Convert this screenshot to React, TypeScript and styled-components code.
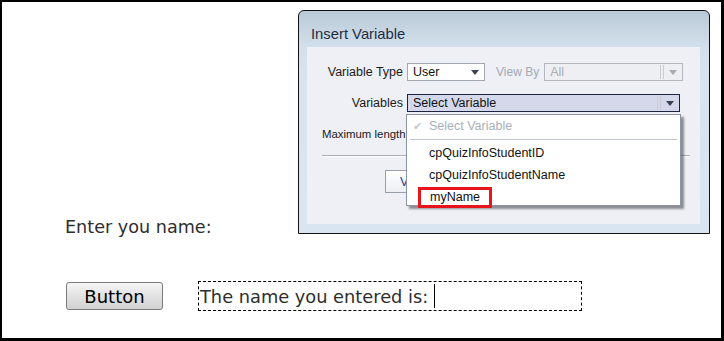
import * as React from 'react';
import styled, { createGlobalStyle } from 'styled-components';

const GlobalStyle = createGlobalStyle`
  html, body {
    margin: 0;
    padding: 0;
    background: #ffffff;
  }
  * {
    box-sizing: border-box;
  }
`;

const Slide = styled.div`
  width: 724px;
  height: 341px;
  border: 2px solid #000;
  border-right-width: 3px;
  border-bottom-width: 3px;
  background: #fff;
  display: flex;
  flex-direction: column;
  font-family: 'DejaVu Sans', 'Liberation Sans', sans-serif;
`;

const TopRow = styled.div`
  display: flex;
  padding: 8px 0 0 63px;
`;

const PromptColumn = styled.div`
  width: 233px;
  padding-top: 207px;
`;

const Prompt = styled.div`
  font-family: 'DejaVu Sans', sans-serif;
  font-size: 17.6px;
  line-height: 20px;
  color: #2e2e2e;
`;

const BottomRow = styled.div`
  display: flex;
  align-items: center;
  gap: 35px;
  margin-top: 44px;
  padding-left: 64px;
`;

const SlideButton = styled.button`
  width: 97px;
  height: 28px;
  border: 1px solid #7a7a7a;
  border-radius: 3px;
  background: linear-gradient(#f6f6f6, #e2e2e2 50%, #d2d2d2);
  font-family: 'DejaVu Sans', sans-serif;
  font-size: 18px;
  color: #000;
  padding: 0;
`;

const Caption = styled.div`
  width: 384px;
  height: 30px;
  border: 1px dashed #000;
  display: flex;
  align-items: center;
  padding-left: 1px;
  font-family: 'DejaVu Sans', sans-serif;
  font-size: 17.8px;
  color: #2e2e2e;
`;

const Caret = styled.span`
  display: inline-block;
  width: 1px;
  height: 24px;
  background: #000;
  margin-left: 6px;
`;

/* ---- dialog ---- */

const Dialog = styled.div`
  width: 412px;
  height: 224px;
  border: 1px solid #111;
  border-radius: 6px 6px 0 0;
  background: linear-gradient(#b8c9d6 0px, #d3e0eb 36px, #d7e3ef 60px, #d9e5f1);
  display: flex;
  flex-direction: column;
  font-family: 'Liberation Sans', Arial, sans-serif;
  font-size: 12.5px;
  color: #1a1a1a;
`;

const DialogTitle = styled.div`
  height: 36px;
  padding: 15px 0 0 12px;
  font-size: 14.8px;
  line-height: 16px;
  color: #1e2f44;
`;

const Panel = styled.div`
  flex: 1;
  margin: 0 9px 9px 8px;
  background: #eef0f6;
  padding-top: 16px;
  display: flex;
  flex-direction: column;
`;

const FieldRow = styled.div<{ $gap?: number }>`
  display: flex;
  align-items: center;
  height: 18px;
  margin-bottom: ${p => p.$gap ?? 0}px;
`;

const FieldLabel = styled.div<{ $muted?: boolean }>`
  width: ${p => (p.$muted ? 'auto' : '100px')};
  text-align: right;
  padding-right: ${p => (p.$muted ? 5 : 4)}px;
  margin-left: ${p => (p.$muted ? 11 : 0)}px;
  font-size: ${p => (p.$muted ? 12 : 12.5)}px;
  color: ${p => (p.$muted ? '#a4a9b2' : '#1a1a1a')};
  white-space: nowrap;
`;

const Select = styled.div<{ $w: number; $variant?: 'plain' | 'disabled' | 'active' }>`
  position: relative;
  width: ${p => p.$w}px;
  height: 18px;
  display: flex;
  align-items: center;
  padding-left: 5px;
  border: 1px solid
    ${p => (p.$variant === 'active' ? '#1c2442' : p.$variant === 'disabled' ? '#b3b7bf' : '#a3a9b3')};
  background: ${p => (p.$variant === 'active' ? '#d4d8ea' : p.$variant === 'disabled' ? '#eeeff3' : '#ffffff')};
  color: ${p => (p.$variant === 'disabled' ? '#aaadb3' : '#111')};
`;

const SelectText = styled.span`
  flex: 1;
`;

const Splitter = styled.span`
  width: 4px;
  height: 14px;
  border-left: 1px solid #c8cbd1;
  border-right: 1px solid #c8cbd1;
  margin-right: 5px;
`;

const Arrow = styled.span<{ $muted?: boolean }>`
  width: 0;
  height: 0;
  border-left: 4px solid transparent;
  border-right: 4px solid transparent;
  border-top: 5px solid ${p => (p.$muted ? '#a6aab2' : '#3c4356')};
  margin-right: 5px;
`;

const PlainText = styled.div`
  padding-left: 15px;
  height: 18px;
  display: flex;
  align-items: center;
  font-size: 11.4px;
`;

const Rule = styled.div`
  margin: 12px 10px 0 15px;
  height: 2px;
  border-top: 1px solid #a9adb5;
  border-bottom: 1px solid #ffffff;
`;

const ActionRow = styled.div`
  padding: 13px 0 0 78px;
`;

const DialogButton = styled.div`
  width: 40px;
  height: 23px;
  border: 1px solid #9aa0aa;
  background: linear-gradient(#ffffff, #eceef2);
  padding: 4px 0 0 14px;
  color: #2a3a9a;
`;

/* ---- dropdown overlay ---- */

const Menu = styled.div`
  position: absolute;
  top: 19px;
  left: -2px;
  width: 275px;
  height: 92px;
  background: #fff;
  border: 1px solid #8a94a6;
  box-shadow: 3px 3px 2px rgba(60, 60, 60, 0.55);
  z-index: 2;
`;

const MenuItem = styled.div<{ $muted?: boolean }>`
  height: 22px;
  display: flex;
  align-items: center;
  padding-left: 22px;
  color: ${p => (p.$muted ? '#a8aebb' : '#111')};
  position: relative;
`;

const Check = styled.span`
  position: absolute;
  left: 6px;
  color: #c4c8d0;
  font-size: 11px;
`;

const MenuSeparator = styled.div`
  height: 1px;
  margin: 2px 3px 2px 3px;
  background: #c2c6ce;
`;

const Highlight = styled.span`
  margin-left: -11px;
  padding: 0 9px;
  height: 21px;
  display: flex;
  align-items: center;
  border: 3px solid #e8141c;
`;

export default function App() {
  return (
    <>
      <GlobalStyle />
      <Slide>
        <TopRow>
          <PromptColumn>
            <Prompt>Enter you name:</Prompt>
          </PromptColumn>
          <Dialog>
            <DialogTitle>Insert Variable</DialogTitle>
            <Panel>
              <FieldRow $gap={13}>
                <FieldLabel>Variable Type</FieldLabel>
                <Select $w={78}>
                  <SelectText>User</SelectText>
                  <Arrow />
                </Select>
                <FieldLabel $muted>View By</FieldLabel>
                <Select $w={139} $variant="disabled">
                  <SelectText>All</SelectText>
                  <Splitter />
                  <Arrow $muted />
                </Select>
              </FieldRow>
              <FieldRow $gap={13}>
                <FieldLabel>Variables</FieldLabel>
                <Select $w={273} $variant="active">
                  <SelectText>Select Variable</SelectText>
                  <Splitter />
                  <Arrow />
                  <Menu>
                    <MenuItem $muted>
                      <Check>✔</Check>
                      Select Variable
                    </MenuItem>
                    <MenuSeparator />
                    <MenuItem>cpQuizInfoStudentID</MenuItem>
                    <MenuItem>cpQuizInfoStudentName</MenuItem>
                    <MenuItem>
                      <Highlight>myName</Highlight>
                    </MenuItem>
                  </Menu>
                </Select>
              </FieldRow>
              <PlainText>Maximum length</PlainText>
              <Rule />
              <ActionRow>
                <DialogButton>V</DialogButton>
              </ActionRow>
            </Panel>
          </Dialog>
        </TopRow>
        <BottomRow>
          <SlideButton>Button</SlideButton>
          <Caption>
            The name you entered is:
            <Caret />
          </Caption>
        </BottomRow>
      </Slide>
    </>
  );
}
